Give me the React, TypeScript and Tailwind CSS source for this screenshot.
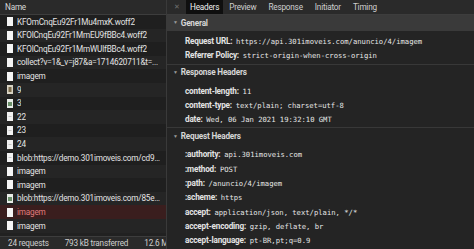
import React from 'react';

type Row = { name: string; icon: 'doc' | 'img' | 'pic' | 'blank'; bad?: boolean };

const rows: Row[] = [
  { name: 'KFOmCnqEu92Fr1Mu4mxK.woff2', icon: 'doc' },
  { name: 'KFOlCnqEu92Fr1MmEU9fBBc4.woff2', icon: 'doc' },
  { name: 'KFOlCnqEu92Fr1MmWUlfBBc4.woff2', icon: 'doc' },
  { name: 'collect?v=1&_v=j87&a=1714620711&t=...', icon: 'doc' },
  { name: 'imagem', icon: 'doc' },
  { name: '9', icon: 'pic' },
  { name: '3', icon: 'img' },
  { name: '22', icon: 'blank' },
  { name: '23', icon: 'blank' },
  { name: '24', icon: 'blank' },
  { name: 'blob:https://demo.301imoveis.com/cd929', icon: 'blank' },
  { name: 'imagem', icon: 'doc' },
  { name: 'imagem', icon: 'doc' },
  { name: 'blob:https://demo.301imoveis.com/85ee3', icon: 'img' },
  { name: 'imagem', icon: 'doc', bad: true },
  { name: 'imagem', icon: 'doc' },
];

const ui = "font-['Roboto',sans-serif] tracking-[-0.2px]";
const mono = "font-['DejaVu_Sans_Mono',monospace] tracking-normal";

function FileIcon({ kind }: { kind: Row['icon'] }) {
  if (kind === 'pic')
    return (
      <svg width="6" height="9" viewBox="0 0 6 9" className="shrink-0">
        <rect x="0" y="0" width="6" height="9" fill="#d8d3c4" />
        <rect x="1.5" y="2" width="3" height="5" fill="#7a6a4a" />
      </svg>
    );
  if (kind === 'img')
    return (
      <svg width="6" height="9" viewBox="0 0 6 9" className="shrink-0">
        <rect x="0" y="0" width="6" height="9" fill="#e8ece8" />
        <rect x="1" y="3" width="4" height="4" fill="#6b8f6a" />
      </svg>
    );
  if (kind === 'blank')
    return (
      <svg width="6" height="9" viewBox="0 0 6 9" className="shrink-0">
        <rect x="0" y="0" width="6" height="9" fill="#f2f2f2" />
        <rect x="1.5" y="4" width="3" height="1" fill="#c4c4c4" />
      </svg>
    );
  return (
    <svg width="6" height="9" viewBox="0 0 6 9" className="shrink-0">
      <rect x="0" y="0" width="6" height="9" fill="#f5f5f5" />
    </svg>
  );
}

function Section({ title, active, children }: { title: string; active?: boolean; children: React.ReactNode }) {
  return (
    <div className="border-b border-[#383838]">
      <div className={`flex items-center gap-[3px] h-[16px] pl-[6px] text-[8.2px] font-bold text-[#d6d6d6] ${active ? 'bg-[#3a3a3a]' : ''}`}>
        <span className="text-[5px] text-[#9a9a9a]">▼</span>
        {title}
      </div>
      <div className="pt-[1px] pb-[3px]">{children}</div>
    </div>
  );
}

function KV({ k, v }: { k: string; v: string }) {
  return (
    <div className="h-[14.3px] leading-[14.3px] pl-[18px] whitespace-nowrap">
      <span className="text-[8.2px] font-bold text-[#e3e3e3]">{k}</span>{' '}
      <span className={`${mono} text-[7.2px] text-[#e6e6e6]`}>{v}</span>
    </div>
  );
}

export default function App() {
  return (
    <div className={`w-[474px] h-[249px] overflow-hidden flex bg-[#242424] text-[#e0e0e0] ${ui}`}>
      {/* request list */}
      <div className="w-[167px] shrink-0 flex flex-col border-r border-[#3a3a3a] bg-[#212121]">
        <div className="h-[15px] shrink-0 flex items-center pl-[5px] text-[8.2px] text-[#d8d8d8] bg-[#2a2a2a] border-b border-[#3d3d3d]">Name</div>
        <div className="flex-1 overflow-hidden">
          {rows.map((r, i) => (
            <div
              key={i}
              className={`h-[13.6px] flex items-center gap-[4px] pl-[7px] pr-[6px] whitespace-nowrap overflow-hidden text-[8.2px] ${
                r.bad ? 'bg-[#3a1e1e] text-[#e07b7b]' : i % 2 ? 'bg-[#252525] text-[#e4e4e4]' : 'bg-[#1f1f1f] text-[#e4e4e4]'
              }`}
            >
              <FileIcon kind={r.icon} />
              <span className="overflow-hidden text-ellipsis">{r.name}</span>
            </div>
          ))}
        </div>
        <div className="h-[13px] shrink-0 flex items-center text-[8.2px] text-[#cfcfcf] bg-[#2a2a2a] border-t border-[#3d3d3d] whitespace-nowrap overflow-hidden">
          <span className="px-[8px]">24 requests</span>
          <span className="w-px h-[9px] bg-[#555]" />
          <span className="px-[8px]">793 kB transferred</span>
          <span className="w-px h-[9px] bg-[#555]" />
          <span className="px-[8px]">12.6 MB r</span>
        </div>
      </div>

      {/* details */}
      <div className="flex-1 flex flex-col min-w-0">
        <div className="h-[15px] shrink-0 flex items-stretch bg-[#2a2a2a] border-b border-[#3d3d3d] text-[8.2px] text-[#cfcfcf] whitespace-nowrap">
          <span className="w-[19px] flex items-center justify-center text-[7px] text-[#6f6f6f]">✕</span>
          <span className="px-[4px] flex items-center bg-[#0f0f0f] text-[#f0f0f0]">Headers</span>
          <span className="px-[6px] flex items-center">Preview</span>
          <span className="px-[6px] flex items-center">Response</span>
          <span className="px-[6px] flex items-center">Initiator</span>
          <span className="px-[6px] flex items-center">Timing</span>
        </div>
        <div className="flex-1 overflow-hidden">
          <Section title="General" active>
            <KV k="Request URL:" v="https://api.301imoveis.com/anuncio/4/imagem" />
            <KV k="Referrer Policy:" v="strict-origin-when-cross-origin" />
          </Section>
          <Section title="Response Headers">
            <KV k="content-length:" v="11" />
            <KV k="content-type:" v="text/plain; charset=utf-8" />
            <KV k="date:" v="Wed, 06 Jan 2021 19:32:10 GMT" />
          </Section>
          <Section title="Request Headers">
            <KV k=":authority:" v="api.301imoveis.com" />
            <KV k=":method:" v="POST" />
            <KV k=":path:" v="/anuncio/4/imagem" />
            <KV k=":scheme:" v="https" />
            <KV k="accept:" v="application/json, text/plain, */*" />
            <KV k="accept-encoding:" v="gzip, deflate, br" />
            <KV k="accept-language:" v="pt-BR,pt;q=0.9" />
            <KV k="content-length:" v="1287654" />
          </Section>
        </div>
      </div>
    </div>
  );
}
